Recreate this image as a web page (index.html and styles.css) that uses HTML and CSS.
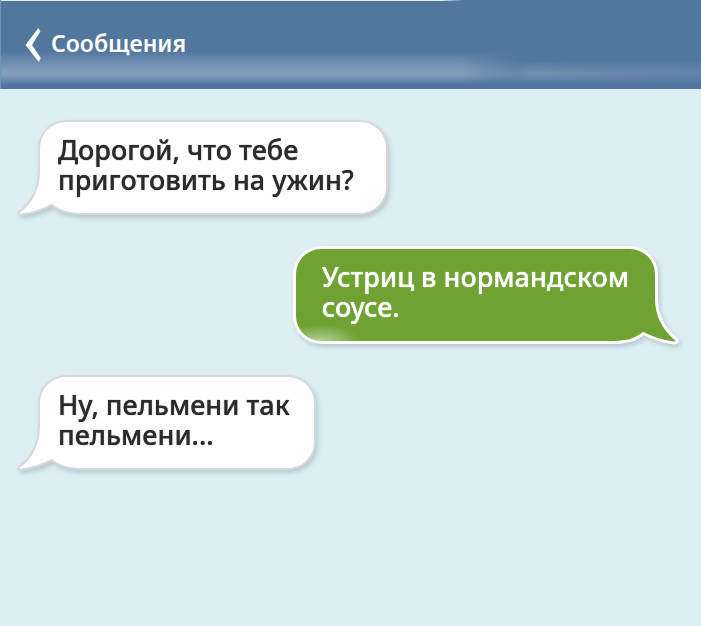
FILE: index.html
```html
<!DOCTYPE html>
<html lang="ru">
<head>
<meta charset="utf-8">
<meta name="viewport" content="width=device-width, initial-scale=1">
<title>Сообщения</title>
<link rel="stylesheet" href="styles.css">
</head>
<body>
<header class="topbar">
  <a class="back" href="#">
    <svg class="chevron" width="16" height="36" viewBox="0 0 16 36" aria-hidden="true"><path d="M13.4 1 15.400 4.500 7 18 15.800 31 13.800 35 0.500 18z" fill="#fff"/></svg>
    <span>Сообщения</span>
  </a>
</header>
<main class="chat">
  <div class="bubble incoming roomy">
    <svg class="tail" width="72" height="48" viewBox="0 0 72 48" aria-hidden="true"><path class="tail-fill" d="M23 0C23 20 14 34 3 42C1 45 4 45 8 44C18 43 28 39 36 35C44 42 54 44 70 44V0z"/><path class="tail-line" d="M23 0C23 20 14 34 3 42C1 45 4 45 8 44C18 43 28 39 36 35C44 42 54 44 70 44"/></svg>
    <p class="text">Дорогой, что тебе<br>приготовить на ужин?</p>
  </div>
  <div class="bubble outgoing">
    <svg class="tail" width="72" height="48" viewBox="0.5 0.5 72 48" aria-hidden="true"><path class="tail-fill" d="M49 0C49 20 58 32 69 41C71 44 68 45 64 44C54 43 44 39 36 35C28 42 18 44 2 44V0z"/><path class="tail-line" d="M49 0C49 20 58 32 69 41C71 44 68 45 64 44C54 43 44 39 36 35C28 42 18 44 2 44"/></svg>
    <p class="text">Устриц в нормандском<br>соусе.</p>
  </div>
  <div class="bubble incoming">
    <svg class="tail" width="72" height="48" viewBox="0 0 72 48" aria-hidden="true"><path class="tail-fill" d="M23 0C23 20 14 34 3 42C1 45 4 45 8 44C18 43 28 39 36 35C44 42 54 44 70 44V0z"/><path class="tail-line" d="M23 0C23 20 14 34 3 42C1 45 4 45 8 44C18 43 28 39 36 35C44 42 54 44 70 44"/></svg>
    <p class="text">Ну, пельмени так<br>пельмени...</p>
  </div>
</main>
</body>
</html>
```
FILE: styles.css
```css
* { box-sizing: border-box; }

body {
  margin: 0;
  min-height: 100vh;
  background: #ddeff3;
  font-family: "Noto Sans", "Open Sans", sans-serif;
}

.topbar {
  position: relative;
  display: flex;
  align-items: center;
  height: 89px;
  padding: 0 24px 4px;
  border-left: 1px solid #6f98b6;
  background:
    linear-gradient(90deg, #ddeff3 63%, transparent 66%) top / 100% 1px no-repeat,
    linear-gradient(#52779f 88%, #52739f);
}

/* Soft light bands along the bottom of the bar */
.topbar::before,
.topbar::after {
  content: "";
  position: absolute;
  left: 0;
  right: 0;
  bottom: 4px;
}

.topbar::before {
  height: 34px;
  background: linear-gradient(transparent, #8ca4c080 35%, #829dba 58%, #829dba 70%, transparent);
  mask-image: linear-gradient(90deg, #000 66%, transparent 74%);
}

.topbar::after {
  height: 24px;
  background: linear-gradient(transparent, #829dbab0 50%, transparent);
  mask-image: linear-gradient(90deg, transparent 66%, #000 76%, #0008 100%);
}

.back {
  position: relative;
  z-index: 1;
  display: flex;
  align-items: center;
  gap: 10px;
  color: #fff;
  font-size: 23px;
  font-weight: 600;
  line-height: 32px;
  text-decoration: none;
}

.chevron { margin-top: 4px; }

.chat {
  display: flex;
  flex-direction: column;
  gap: 31px;
  padding: 31px 43px 40px 38px;
}

.bubble {
  position: relative;
  border: 3px solid;
  border-radius: 28px;
  filter: drop-shadow(2px 3px 2px #8fa5ad80);
}

.incoming {
  align-self: flex-start;
  padding: 13px 24px 18px 18px;
  border-width: 2px;
  border-color: #d5d9db;
  border-bottom-left-radius: 44px 40px;
  background: #fefefe;
  color: #2b2b2b;
}

.roomy { padding-right: 32px; }

.outgoing {
  align-self: flex-end;
  padding: 13px 26px 19px 26px;
  border-color: #fff;
  border-bottom-right-radius: 44px 40px;
  background: radial-gradient(ellipse 40px 16px at 24px 100%, #b4cf96, #6fa233);
  color: #fff;
}

.text {
  position: relative;
  z-index: 1;
  margin: 0;
  font-size: 27px;
  font-weight: 500;
  line-height: 30px;
  text-shadow: 0 0 1px currentColor;
}

.tail {
  position: absolute;
}

.incoming .tail { left: -24px; bottom: -5px; }
.outgoing .tail { right: -25px; bottom: -6px; }

.tail-line {
  fill: none;
  stroke-width: 3px;
  stroke-linejoin: round;
}

.incoming .tail-fill { fill: #fefefe; }
.incoming .tail-line { stroke: #d5d9db; stroke-width: 2px; }
.outgoing .tail-fill { fill: #6fa233; }
.outgoing .tail-line { stroke: #fff; }
```
